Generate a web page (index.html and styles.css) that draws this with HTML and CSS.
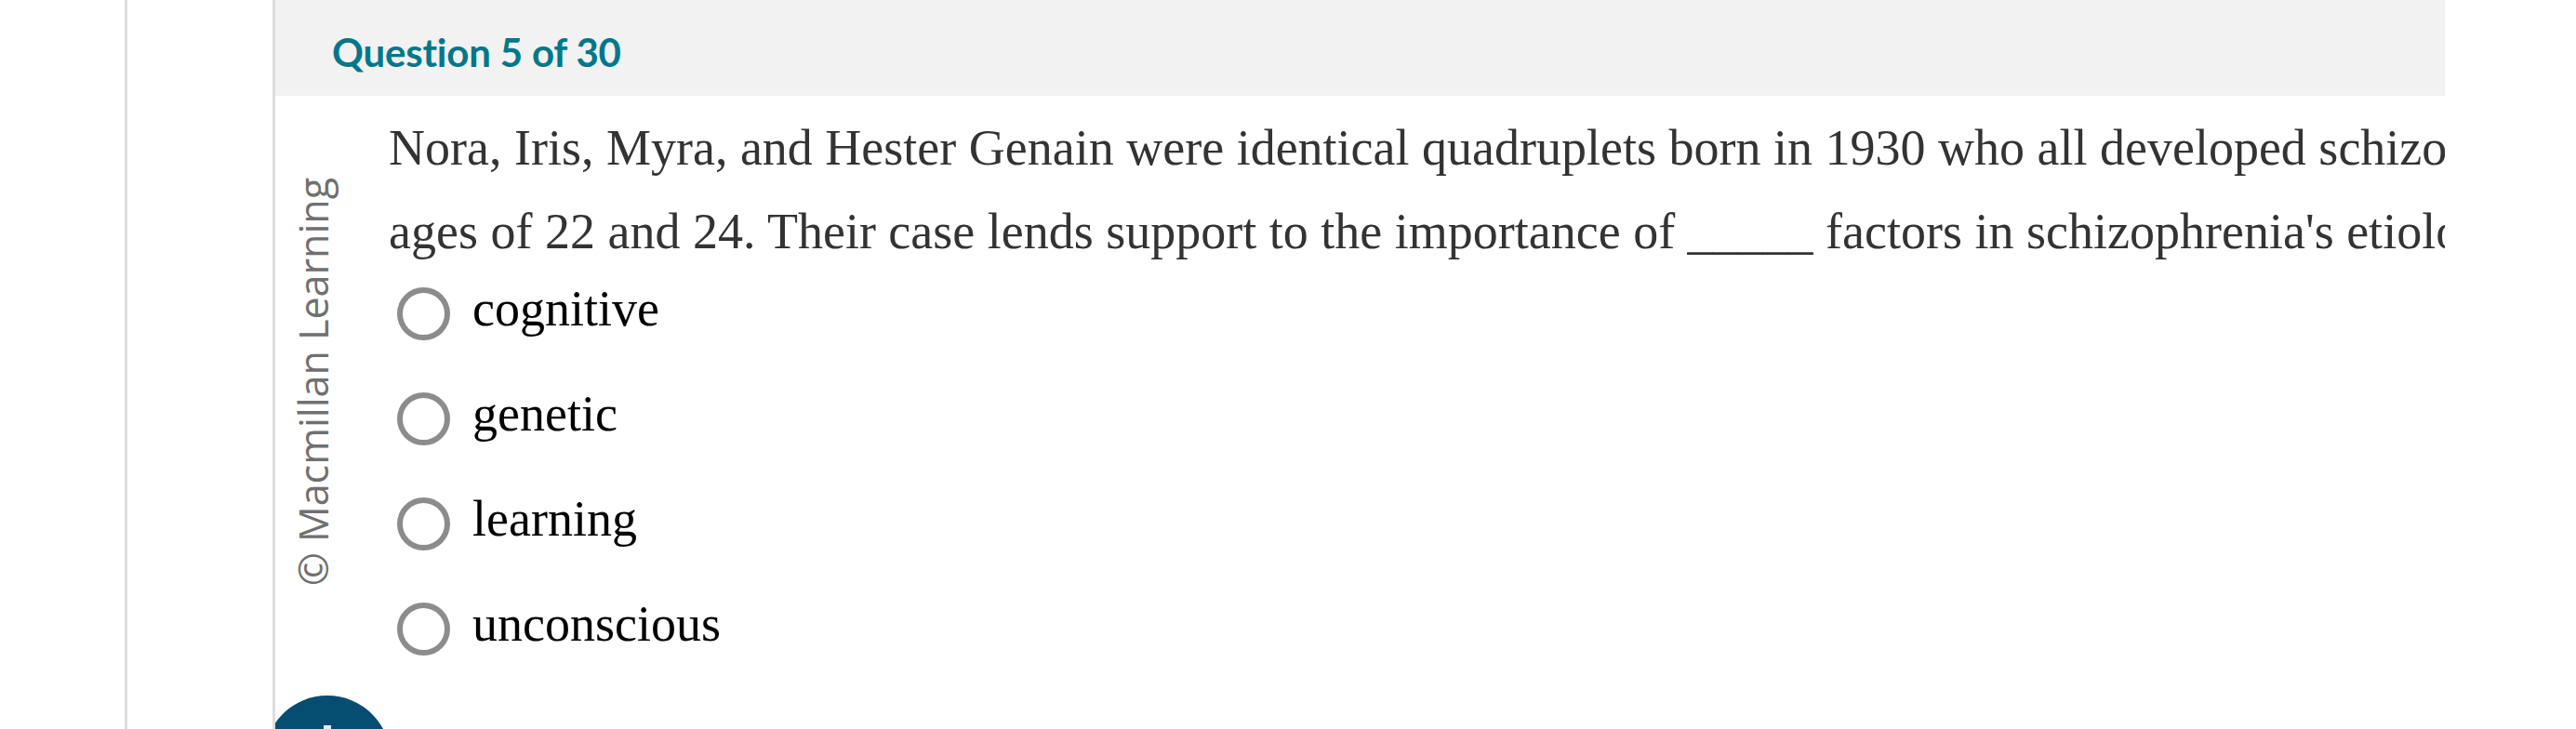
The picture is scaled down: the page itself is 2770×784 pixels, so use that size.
FILE: index.html
```html
<!DOCTYPE html>
<html lang="en">
<head>
<meta charset="utf-8">
<title>Question 5 of 30</title>
<link rel="stylesheet" href="styles.css">
</head>
<body>
<div class="page">
  <div class="rail"></div>
  <div class="gutter"></div>
  <main class="panel">
    <header class="panel-head">
      <h1 class="q-count">Question 5 of 30</h1>
    </header>
    <div class="panel-body">
      <div class="credit-col">
        <div class="credit">© Macmillan Learning</div>
      </div>
      <div class="content">
        <p class="question">Nora, Iris, Myra, and Hester Genain were identical quadruplets born in 1930 who all developed schizophrenia between the ages of 22 and 24. Their case lends support to the importance of _____ factors in schizophrenia's etiology.</p>
        <ul class="options">
          <li class="option"><span class="radio"></span><span class="label">cognitive</span></li>
          <li class="option"><span class="radio"></span><span class="label">genetic</span></li>
          <li class="option"><span class="radio"></span><span class="label">learning</span></li>
          <li class="option"><span class="radio"></span><span class="label">unconscious</span></li>
        </ul>
      </div>
    </div>
    <button class="fab" aria-label="Add">
      <svg width="136" height="136" viewBox="0 0 136 136">
        <path d="M68 32 V104 M32 68 H104" stroke="#dcecf8" stroke-width="8" fill="none"/>
      </svg>
    </button>
  </main>
</div>
</body>
</html>
```

FILE: styles.css
```css
html, body {
  margin: 0;
  padding: 0;
  background: #ffffff;
}

body {
  width: 2770px;
  height: 784px;
  overflow: hidden;
}

.page {
  display: flex;
  height: 784px;
}

.rail {
  width: 134px;
  flex-shrink: 0;
  border-right: 3px solid #dddddd;
}

.gutter {
  width: 156px;
  flex-shrink: 0;
}

.panel {
  position: relative;
  width: 2336px;
  flex-shrink: 0;
  border-left: 3px solid #dddddd;
  box-sizing: border-box;
  overflow: hidden;
}

.panel-head {
  height: 103px;
  box-sizing: border-box;
  background: #f2f2f2;
  padding: 32px 0 0 61px;
}

.q-count {
  margin: 0;
  font-family: "Lato", "Open Sans", sans-serif;
  font-weight: 700;
  font-size: 42px;
  line-height: 49px;
  color: #00788a;
  letter-spacing: -0.2px;
}

.panel-body {
  display: flex;
}

.credit-col {
  width: 122px;
  flex-shrink: 0;
  display: flex;
  padding-left: 11px;
  box-sizing: border-box;
}

.credit {
  align-self: flex-start;
  margin-top: 88px;
  writing-mode: vertical-rl;
  text-orientation: sideways;
  transform: rotate(180deg);
  font-family: "Open Sans", "DejaVu Sans", sans-serif;
  font-weight: 400;
  font-size: 43px;
  color: #707070;
  white-space: nowrap;
}

.content {
  width: 2700px;
  flex-shrink: 0;
}

.question {
  margin: 0;
  padding-top: 11px;
  font-family: "Liberation Serif", "Times New Roman", serif;
  font-size: 54px;
  line-height: 90px;
  color: #333333;
}

.options {
  list-style: none;
  margin: -13px 0 0 0;
  padding: 0 0 0 9px;
}

.option {
  height: 113px;
  display: flex;
  align-items: center;
  gap: 24px;
}

.radio {
  width: 57px;
  height: 57px;
  box-sizing: border-box;
  border: 6px solid #8c8c8c;
  border-radius: 50%;
  flex-shrink: 0;
}

.label {
  font-family: "Liberation Serif", "Times New Roman", serif;
  font-size: 54px;
  line-height: 57px;
  color: #000000;
  margin-bottom: 10px;
}

.fab {
  position: absolute;
  left: -12px;
  top: 748px;
  width: 136px;
  height: 136px;
  padding: 0;
  border: none;
  border-radius: 50%;
  background: #064d72;
}

.fab svg {
  display: block;
}
```
